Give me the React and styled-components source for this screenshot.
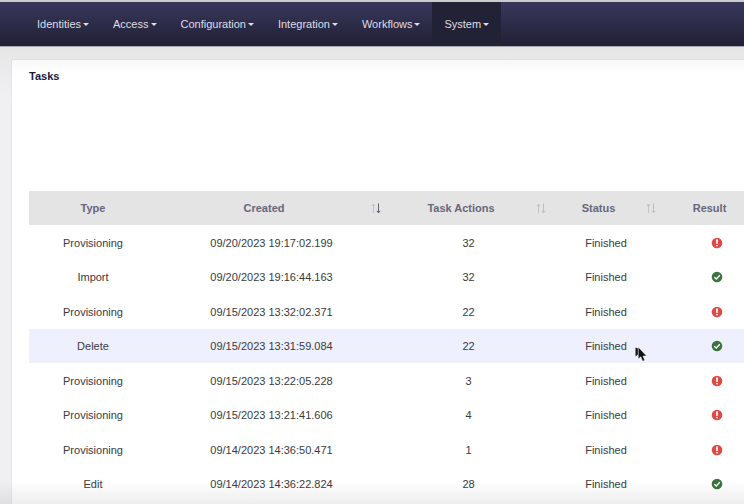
import React, { useState } from "react";
import styled, { createGlobalStyle } from "styled-components";

const menuItems = [
  "Identities",
  "Access",
  "Configuration",
  "Integration",
  "Workflows",
  "System",
];

const columns = [
  { label: "Type", width: 128 },
  { label: "Created", width: 229, sortable: true },
  { label: "Task Actions", width: 165, sortable: true },
  { label: "Status", width: 110, sortable: true },
  { label: "Result", width: 112, sortable: true },
];

const tasks = [
  { type: "Provisioning", created: "09/20/2023 19:17:02.199", actions: 32, ok: false },
  { type: "Import", created: "09/20/2023 19:16:44.163", actions: 32, ok: true },
  { type: "Provisioning", created: "09/15/2023 13:32:02.371", actions: 22, ok: false },
  { type: "Delete", created: "09/15/2023 13:31:59.084", actions: 22, ok: true },
  { type: "Provisioning", created: "09/15/2023 13:22:05.228", actions: 3, ok: false },
  { type: "Provisioning", created: "09/15/2023 13:21:41.606", actions: 4, ok: false },
  { type: "Provisioning", created: "09/14/2023 14:36:50.471", actions: 1, ok: false },
  { type: "Edit", created: "09/14/2023 14:36:22.824", actions: 28, ok: true },
];

const SortArrows = ({ sorted }) => (
  <SortIcon viewBox="0 0 10 12" aria-hidden="true">
    <path d="M2.5 11V2M1 4L2.5 2L4 4" stroke="#c2c2c6" />
    <path
      d="M7.5 1.5V10.5M5.8 8.8L7.5 10.9L9.2 8.8"
      stroke={sorted ? "#626070" : "#bdbdc3"}
    />
  </SortIcon>
);

const ResultIcon = ({ ok }) => (
  <StatusIcon viewBox="0 0 12 12" role="img" aria-label={ok ? "Success" : "Error"}>
    <circle cx="6" cy="6" r="5.3" fill={ok ? "#3b743e" : "#dc4a45"} />
    {ok ? (
      <path d="M3.3 6.2L5.3 8L8.8 4.3" fill="none" stroke="#fff" strokeWidth="1.5" />
    ) : (
      <>
        <path d="M5 2.6H7L6.7 6.9H5.3Z" fill="#fff" />
        <circle cx="6" cy="8.6" r="0.9" fill="#fff" />
      </>
    )}
  </StatusIcon>
);

const App = () => {
  const [active, setActive] = useState("System");
  const [selected, setSelected] = useState(3);
  const [sortBy, setSortBy] = useState("Created");

  return (
    <>
      <GlobalStyle />
      <Page>
        <NavBar>
          {menuItems.map((item) => (
            <NavButton
              key={item}
              type="button"
              aria-haspopup="menu"
              $active={item === active}
              onClick={() => setActive(item)}
            >
              {item}
              <Caret />
            </NavButton>
          ))}
        </NavBar>
        <Content>
          <Panel>
            <Title>Tasks</Title>
            <Table>
              <colgroup>
                {columns.map((column) => (
                  <Column key={column.label} $width={column.width} />
                ))}
              </colgroup>
              <thead>
                <tr>
                  {columns.map((column) => (
                    <HeadCell key={column.label} scope="col">
                      {column.sortable ? (
                        <SortButton
                          type="button"
                          onClick={() => setSortBy(column.label)}
                        >
                          <span>{column.label}</span>
                          <SortArrows sorted={column.label === sortBy} />
                        </SortButton>
                      ) : (
                        column.label
                      )}
                    </HeadCell>
                  ))}
                </tr>
              </thead>
              <tbody>
                {tasks.map((task, index) => (
                  <Row
                    key={task.created}
                    $highlighted={index === selected}
                    onClick={() => setSelected(index)}
                  >
                    <Cell>{task.type}</Cell>
                    <Cell>{task.created}</Cell>
                    <Cell>{task.actions}</Cell>
                    <Cell>
                      Finished
                      {index === selected && (
                        <Pointer viewBox="0 0 12 17" aria-hidden="true">
                          <path d="M0.5 1.5V10.5L3 8.5V2.5Z" fill="#15151c" />
                          <path
                            d="M3.2 1V13L5.8 10.8L7.6 15.2L9.8 14.3L8 10.1H11.6Z"
                            fill="#111"
                            stroke="#fff"
                            strokeWidth="0.5"
                          />
                        </Pointer>
                      )}
                    </Cell>
                    <Cell>
                      <ResultIcon ok={task.ok} />
                    </Cell>
                  </Row>
                ))}
              </tbody>
            </Table>
          </Panel>
        </Content>
        <BottomFade />
      </Page>
    </>
  );
};

export default App;

const GlobalStyle = createGlobalStyle`
  * {
    box-sizing: border-box;
  }

  body {
    margin: 0;
    font-family: "Liberation Sans", Arial, sans-serif;
    font-size: 11px;
    color: #3a3a3e;
  }
`;

const Page = styled.div`
  position: relative;
  display: flex;
  flex-direction: column;
  height: 100vh;
  overflow: hidden;
  background: #f0f0f3;
`;

const NavBar = styled.nav`
  display: flex;
  flex-shrink: 0;
  height: 47px;
  padding-left: 25px;
  border-top: 2px solid #cbcbce;
  border-bottom: 1px solid #a9a9b2;
  background: linear-gradient(#39385c, #202034);
`;

const NavButton = styled.button`
  display: flex;
  align-items: center;
  gap: 2px;
  padding: 0 12px;
  border: none;
  background: ${(props) => (props.$active ? "#222236" : "transparent")};
  color: #dedee6;
  font: inherit;
  cursor: pointer;
`;

const Caret = styled.span`
  border: 3px solid transparent;
  border-top-color: currentColor;
  border-bottom: none;
`;

const Content = styled.main`
  flex: 1;
  padding: 13px 0 0 12px;
  background: linear-gradient(#e5e5e6, #e9e9ea 13px, #f0f0f3 50px);
`;

const Panel = styled.section`
  height: 100%;
  padding: 8px 0 0 17px;
  overflow: hidden;
  background: linear-gradient(#f7f7f7, #fff 12px);
  box-shadow: 0 0 1px #b8b8bc;
`;

const Title = styled.h1`
  margin: 0 0 107px;
  font-size: 11px;
  line-height: 16px;
  color: #1b1840;
`;

const Table = styled.table`
  width: 100%;
  min-width: 744px;
  table-layout: fixed;
  border-collapse: collapse;
  text-align: center;
`;

const Column = styled.col`
  width: ${(props) => props.$width}px;
`;

const HeadCell = styled.th`
  height: 34px;
  padding: 0;
  background: #e4e4e4;
  color: #68667c;
`;

const SortButton = styled.button`
  display: flex;
  align-items: center;
  width: 100%;
  padding: 0 5px 0 0;
  border: none;
  background: none;
  color: inherit;
  font: inherit;
  cursor: pointer;

  span {
    flex: 1;
  }
`;

const SortIcon = styled.svg`
  width: 10px;
  height: 12px;
  fill: none;
`;

const Row = styled.tr`
  height: 35px;
  background: ${(props) => (props.$highlighted ? "#eef1fd" : "transparent")};

  &:nth-child(even) {
    height: 34px;
  }
`;

const Cell = styled.td`
  position: relative;
  padding: 0;
`;

const StatusIcon = styled.svg`
  display: block;
  width: 12px;
  height: 12px;
  margin: 0 auto;
`;

const Pointer = styled.svg`
  position: absolute;
  left: 84px;
  top: 17px;
  width: 12px;
  height: 17px;
`;

const BottomFade = styled.div`
  position: absolute;
  right: 0;
  bottom: 0;
  left: 0;
  height: 24px;
  background: linear-gradient(transparent, rgba(0, 0, 0, 0.07));
  pointer-events: none;
`;
